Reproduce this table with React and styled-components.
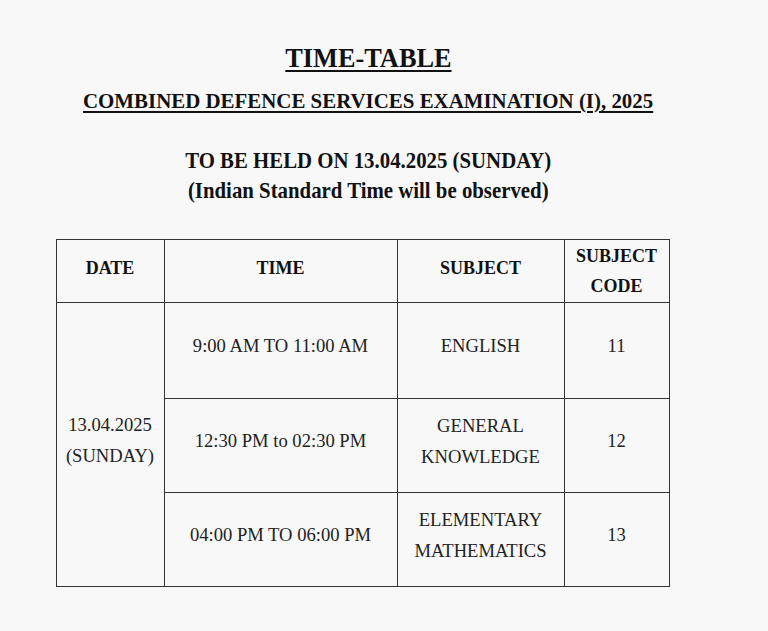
import styled, { createGlobalStyle } from 'styled-components';

const GlobalStyle = createGlobalStyle`
  html, body {
    margin: 0;
    padding: 0;
    background: #f8f8f8;
  }
  body {
    font-family: "Liberation Serif", "Times New Roman", serif;
    color: #1a1a1a;
  }
`;

const Sheet = styled.main`
  width: 736px;
  min-height: 631px;
  padding-top: 42px;
  display: flex;
  flex-direction: column;
  align-items: center;
  box-sizing: border-box;
`;

// scanned headings look squeezed, so each one is scaled horizontally
const Heading = styled.div`
  display: inline-block;
  font-weight: bold;
  font-size: ${p => p.$size}px;
  line-height: ${p => p.$lh}px;
  margin-top: ${p => p.$gap || 0}px;
  transform: scaleX(${p => p.$squeeze});
  color: #111;
  white-space: nowrap;
  text-decoration: ${p => (p.$underline ? 'underline' : 'none')};
  text-decoration-thickness: 2px;
  text-underline-offset: 3px;
`;

const Table = styled.table`
  margin-top: 33px;
  margin-right: 11px;
  border-collapse: collapse;
  table-layout: fixed;
  width: 613px;
  font-size: 18.6px;
  line-height: 31px;
  color: #222;
`;

const HeadCell = styled.th`
  border: 1.5px solid #333;
  height: 63px;
  padding: 0 0 ${p => (p.$tall ? 0 : 6)}px;
  box-sizing: border-box;
  font-size: 18px;
  line-height: 30px;
  font-weight: bold;
  text-align: center;
  vertical-align: middle;
  color: #111;
`;

const Cell = styled.td`
  border: 1.5px solid #333;
  height: ${p => p.$h || 94}px;
  padding: 0 0 10px;
  text-align: center;
  vertical-align: middle;
  box-sizing: border-box;
`;

const rows = [
  { time: '9:00 AM TO 11:00 AM', subject: ['ENGLISH'], code: '11', h: 96 },
  { time: '12:30 PM to 02:30 PM', subject: ['GENERAL', 'KNOWLEDGE'], code: '12', h: 94 },
  { time: '04:00 PM TO 06:00 PM', subject: ['ELEMENTARY', 'MATHEMATICS'], code: '13', h: 94 },
];

function App() {
  return (
    <>
      <GlobalStyle />
      <Sheet>
        <Heading $size={28} $lh={32} $squeeze={0.94} $underline>TIME-TABLE</Heading>
        <Heading $size={22} $lh={26} $squeeze={0.95} $gap={14} $underline>
          COMBINED DEFENCE SERVICES EXAMINATION (I), 2025
        </Heading>
        <Heading $size={23} $lh={30} $squeeze={0.905} $gap={32}>
          TO BE HELD ON 13.04.2025 (SUNDAY)
        </Heading>
        <Heading $size={23} $lh={30} $squeeze={0.905}>
          (Indian Standard Time will be observed)
        </Heading>

        <Table>
          <colgroup>
            <col style={{ width: 108 }} />
            <col style={{ width: 233 }} />
            <col style={{ width: 167 }} />
            <col style={{ width: 105 }} />
          </colgroup>
          <thead>
            <tr>
              <HeadCell>DATE</HeadCell>
              <HeadCell>TIME</HeadCell>
              <HeadCell>SUBJECT</HeadCell>
              <HeadCell $tall>SUBJECT<br />CODE</HeadCell>
            </tr>
          </thead>
          <tbody>
            {rows.map((r, i) => (
              <tr key={r.code}>
                {i === 0 && (
                  <Cell rowSpan={3}>13.04.2025<br />(SUNDAY)</Cell>
                )}
                <Cell $h={r.h}>{r.time}</Cell>
                <Cell $h={r.h}>
                  {r.subject.map((s, j) => (
                    <span key={s}>{j > 0 && <br />}{s}</span>
                  ))}
                </Cell>
                <Cell $h={r.h}>{r.code}</Cell>
              </tr>
            ))}
          </tbody>
        </Table>
      </Sheet>
    </>
  );
}

export default App;
